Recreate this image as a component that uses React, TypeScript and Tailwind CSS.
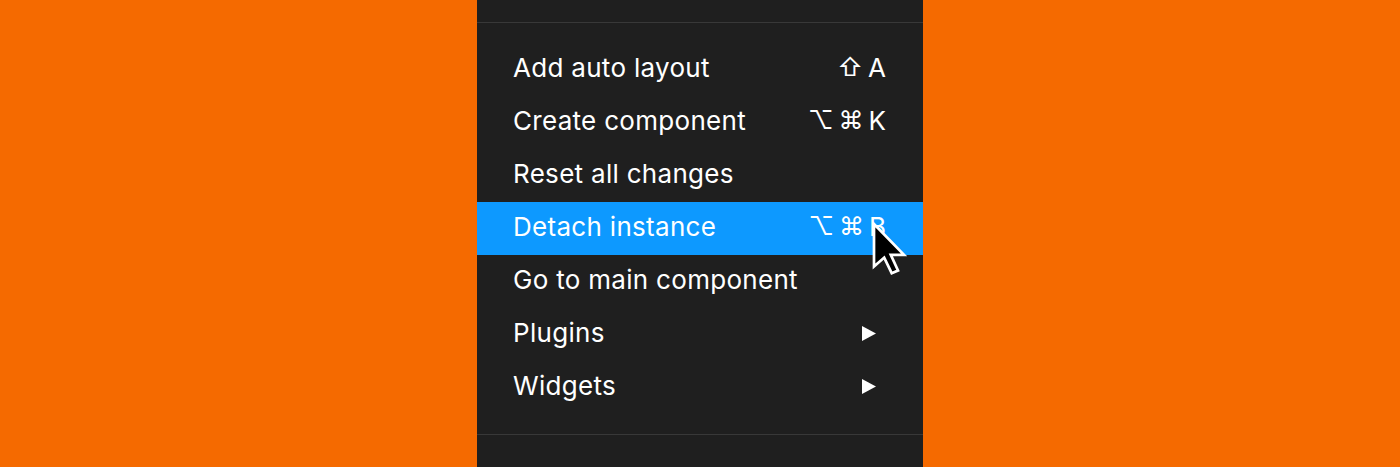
import * as React from 'react';

type MenuItem = {
  label: string;
  keys?: string[];
  submenu?: boolean;
  active?: boolean;
};

const items: MenuItem[] = [
  { label: 'Add auto layout', keys: ['⇧', 'A'] },
  { label: 'Create component', keys: ['⌥', '⌘', 'K'] },
  { label: 'Reset all changes' },
  { label: 'Detach instance', keys: ['⌥', '⌘', 'B'], active: true },
  { label: 'Go to main component' },
  { label: 'Plugins', submenu: true },
  { label: 'Widgets', submenu: true }
];

function SubmenuArrow(): React.JSX.Element {
  return (
    <svg width="14" height="15" viewBox="0 0 14 15" className="mr-[10px] mt-[1px]">
      <path d="M0 0 L14 7.5 L0 15 Z" fill="#ffffff" />
    </svg>
  );
}

function Cursor(): React.JSX.Element {
  return (
    <svg
      width="36"
      height="54"
      viewBox="0 0 12 18"
      className="pointer-events-none absolute right-[-21px] top-[14px]"
    >
      <path
        d="M1 1 L1 15.2 L4.4 12.2 L6.9 17.4 L9 16.5 L6.6 11.3 L11 11.3 Z"
        fill="#000000"
        stroke="#ffffff"
        strokeWidth="0.9"
        strokeLinejoin="miter"
      />
    </svg>
  );
}

function Row({ item }: { item: MenuItem }): React.JSX.Element {
  return (
    <div
      className={`flex h-[53px] items-center justify-between pb-1 pl-9 pr-[37px] ${
        item.active ? 'bg-[#0d99ff]' : ''
      }`}
    >
      <span className="text-[26px] tracking-[0.3px]">{item.label}</span>
      {item.keys && (
        <span className="relative flex items-center gap-[5px] text-[26px]">
          {item.keys.map((k, i) => (
            <span key={i} className={/[A-Z]/.test(k) ? '' : 'text-[25px]'}>
              {k}
            </span>
          ))}
          {item.active && <Cursor />}
        </span>
      )}
      {item.submenu && <SubmenuArrow />}
    </div>
  );
}

export default function App(): React.JSX.Element {
  return (
    <div className="flex h-[467px] w-[1400px] justify-center bg-[#f56a00] font-['Inter',sans-serif] text-white">
      <div className="flex w-[446px] flex-col bg-[#1f1f1f]">
        <div className="h-[23px] border-b border-[#383838]" />
        <div className="py-5">
          {items.map((item) => (
            <Row key={item.label} item={item} />
          ))}
        </div>
        <div className="flex-1 border-t border-[#383838]" />
      </div>
    </div>
  );
}
